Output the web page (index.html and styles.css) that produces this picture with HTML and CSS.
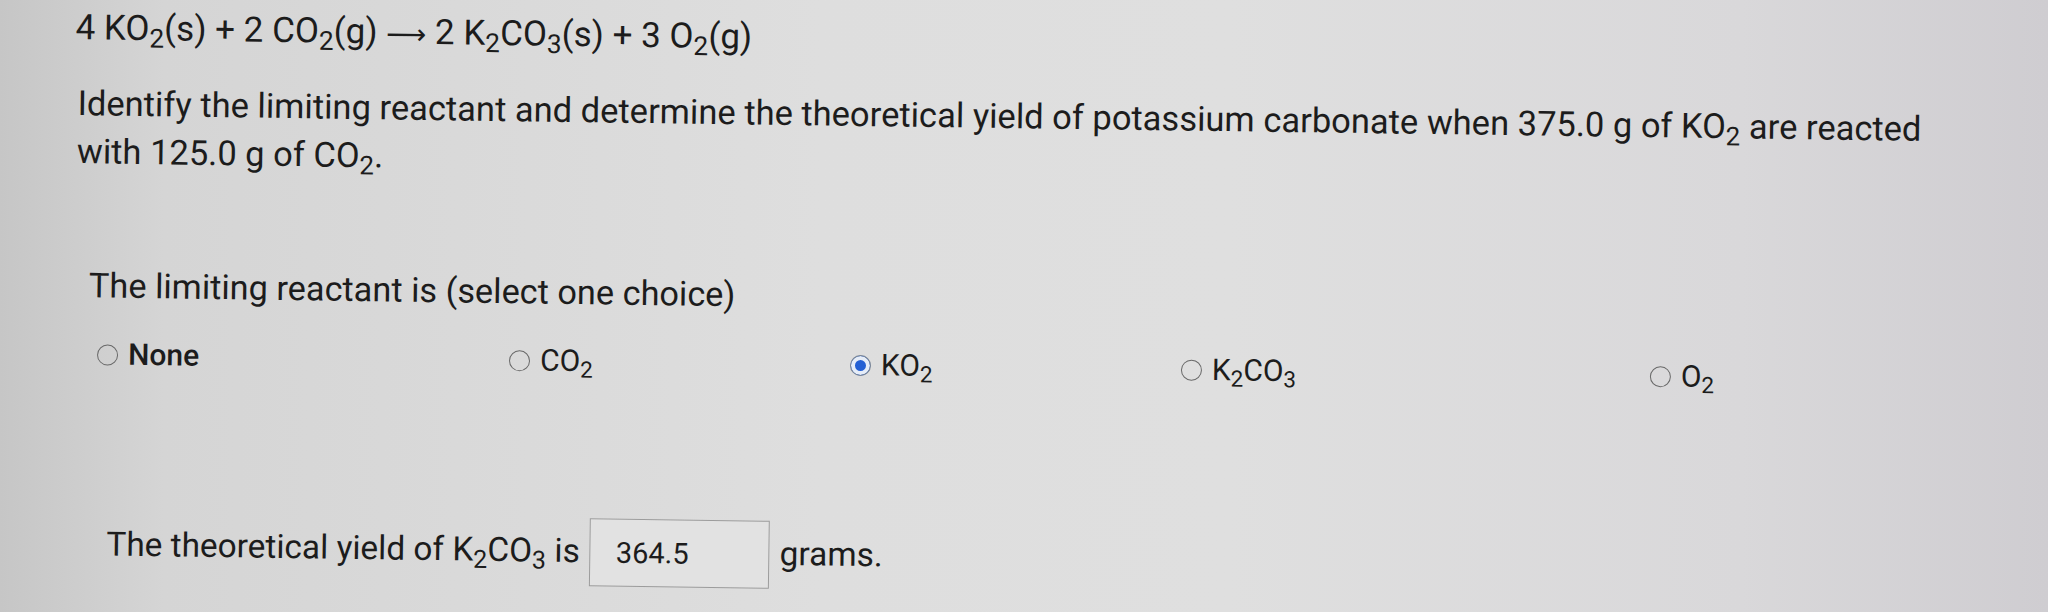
FILE: index.html
```html
<!DOCTYPE html>
<html lang="en">
  <head>
    <meta charset="UTF-8" />
    <meta name="viewport" content="width=device-width, initial-scale=1.0" />
    <title>Limiting Reactant</title>
    <link rel="stylesheet" href="styles.css">
  </head>
  <body>
    <div class="page">
      <div class="equation">
        4 KO<sub>2</sub>(s) + 2 CO<sub>2</sub>(g) <span class="arrow">&#10230;</span> 2 K<sub>2</sub>CO<sub>3</sub>(s) + 3 O<sub>2</sub>(g)
      </div>

      <p class="question">
        <span class="line">Identify the limiting reactant and determine the theoretical yield of potassium carbonate when 375.0 g of KO<sub>2</sub> are reacted</span>
        <span class="line">with 125.0 g of CO<sub>2</sub>.</span>
      </p>

      <div class="prompt">The limiting reactant is (select one choice)</div>

      <div class="choices">
        <label class="choice none"><input type="radio" name="limiting" /><span>None</span></label>
        <label class="choice"><input type="radio" name="limiting" /><span>CO<sub>2</sub></span></label>
        <label class="choice"><input type="radio" name="limiting" checked /><span>KO<sub>2</sub></span></label>
        <label class="choice"><input type="radio" name="limiting" /><span>K<sub>2</sub>CO<sub>3</sub></span></label>
        <label class="choice"><input type="radio" name="limiting" /><span>O<sub>2</sub></span></label>
      </div>

      <div class="yield">
        <span>The theoretical yield of K<sub>2</sub>CO<sub>3</sub> is</span>
        <input class="answer" type="text" value="364.5" readonly />
        <span>grams.</span>
      </div>
    </div>
  </body>
</html>
```

FILE: styles.css
```css
* {
  margin: 0;
  padding: 0;
  box-sizing: border-box;
  font-family: Roboto, "Liberation Sans", sans-serif;
}

html,
body {
  height: 100%;
  overflow: hidden;
}

body {
  background: linear-gradient(
    90deg,
    #c6c6c6 0%,
    #d5d5d5 8%,
    #dedede 40%,
    #dfdfdf 60%,
    #d9d8da 85%,
    #cfcdd1 100%
  );
  color: #1c1c1c;
}

.page {
  padding: 7px 0 0 76px;
  transform: rotate(0.8deg);
  transform-origin: 0 0;
}

sub {
  font-size: 0.75em;
  vertical-align: -0.28em;
  line-height: 0;
}

.equation {
  font-size: 35px;
  line-height: 40px;
  white-space: nowrap;
}

.arrow {
  font-family: "DejaVu Sans", sans-serif;
  font-size: 28px;
}

.question {
  margin: 29px 0 0 3px;
  font-size: 34.5px;
  line-height: 48px;
  white-space: nowrap;
}

.question .line {
  display: block;
}

.prompt {
  margin: 90px 0 0 17px;
  font-size: 34.3px;
  line-height: 40px;
}

.choices {
  margin: 33px 0 0 26px;
  display: grid;
  grid-template-columns: 412px 341px 331px 469px auto;
  font-size: 30px;
  line-height: 32px;
}

.choice {
  display: flex;
  align-items: center;
  gap: 10px;
}

.choice.none {
  font-weight: 500;
}

.choice input {
  appearance: none;
  width: 21px;
  height: 21px;
  border: 1.5px solid #686868;
  border-radius: 50%;
  background: transparent;
  flex-shrink: 0;
}

.choice input:checked {
  border-color: #7d8794;
  background: #2460d4;
  box-shadow: inset 0 0 0 4px #e6edf8;
}

.yield {
  margin: 141px 0 0 38px;
  display: flex;
  align-items: baseline;
  gap: 10px;
  font-size: 33.4px;
  line-height: 40px;
}

.answer {
  width: 180px;
  height: 68px;
  padding-left: 25px;
  border: 1.5px solid #9c9c9c;
  background: #e2e2e2;
  color: #1c1c1c;
  font-size: 29px;
  outline: none;
}
```
